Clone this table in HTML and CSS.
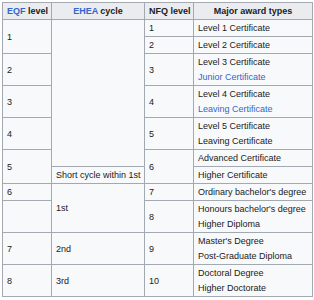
FILE: index.html
```html
<!DOCTYPE html>
<html>
<head>
<meta charset="utf-8">
<link rel="stylesheet" href="styles.css">
</head>
<body>
<table class="wikitable">
  <colgroup>
    <col class="c-eqf">
    <col class="c-ehea">
    <col class="c-nfq">
    <col class="c-award">
  </colgroup>
  <thead>
    <tr>
      <th><a class="link">EQF</a> level</th>
      <th><a class="link">EHEA</a> cycle</th>
      <th>NFQ level</th>
      <th>Major award types</th>
    </tr>
  </thead>
  <tbody>
    <tr>
      <td rowspan="2">1</td>
      <td rowspan="6"></td>
      <td>1</td>
      <td>Level 1 Certificate</td>
    </tr>
    <tr>
      <td>2</td>
      <td>Level 2 Certificate</td>
    </tr>
    <tr>
      <td>2</td>
      <td>3</td>
      <td>Level 3 Certificate<br><a class="link">Junior Certificate</a></td>
    </tr>
    <tr>
      <td>3</td>
      <td>4</td>
      <td>Level 4 Certificate<br><a class="link">Leaving Certificate</a></td>
    </tr>
    <tr>
      <td>4</td>
      <td>5</td>
      <td>Level 5 Certificate<br>Leaving Certificate</td>
    </tr>
    <tr>
      <td rowspan="2">5</td>
      <td rowspan="2">6</td>
      <td>Advanced Certificate</td>
    </tr>
    <tr>
      <td>Short cycle within 1st</td>
      <td>Higher Certificate</td>
    </tr>
    <tr>
      <td>6</td>
      <td rowspan="2">1st</td>
      <td>7</td>
      <td>Ordinary bachelor's degree</td>
    </tr>
    <tr>
      <td></td>
      <td>8</td>
      <td>Honours bachelor's degree<br>Higher Diploma</td>
    </tr>
    <tr>
      <td>7</td>
      <td>2nd</td>
      <td>9</td>
      <td>Master's Degree<br>Post-Graduate Diploma</td>
    </tr>
    <tr>
      <td>8</td>
      <td>3rd</td>
      <td>10</td>
      <td>Doctoral Degree<br>Higher Doctorate</td>
    </tr>
  </tbody>
</table>
</body>
</html>
```
FILE: styles.css
```css
html, body {
  margin: 0;
  padding: 0;
  background: #ffffff;
}

body {
  padding: 2px;
  font-family: "Liberation Sans", Arial, Helvetica, sans-serif;
  font-size: 9px;
  line-height: 15px;
  color: #202122;
}

.wikitable {
  border-collapse: collapse;
  table-layout: fixed;
  width: 310px;
  background: #f8f9fa;
  border: 1px solid #a2a9b1;
}

.c-eqf { width: 49px; }
.c-ehea { width: 93px; }
.c-nfq { width: 49px; }
.c-award { width: 119px; }

.wikitable th,
.wikitable td {
  border: 1px solid #a2a9b1;
  padding: 1px 4px 0 4px;
  vertical-align: middle;
  white-space: nowrap;
}

.wikitable th {
  background: #eaecf0;
  font-weight: bold;
  text-align: center;
}

.wikitable td {
  text-align: left;
}

.link {
  color: #3366cc;
  text-decoration: none;
}
```
